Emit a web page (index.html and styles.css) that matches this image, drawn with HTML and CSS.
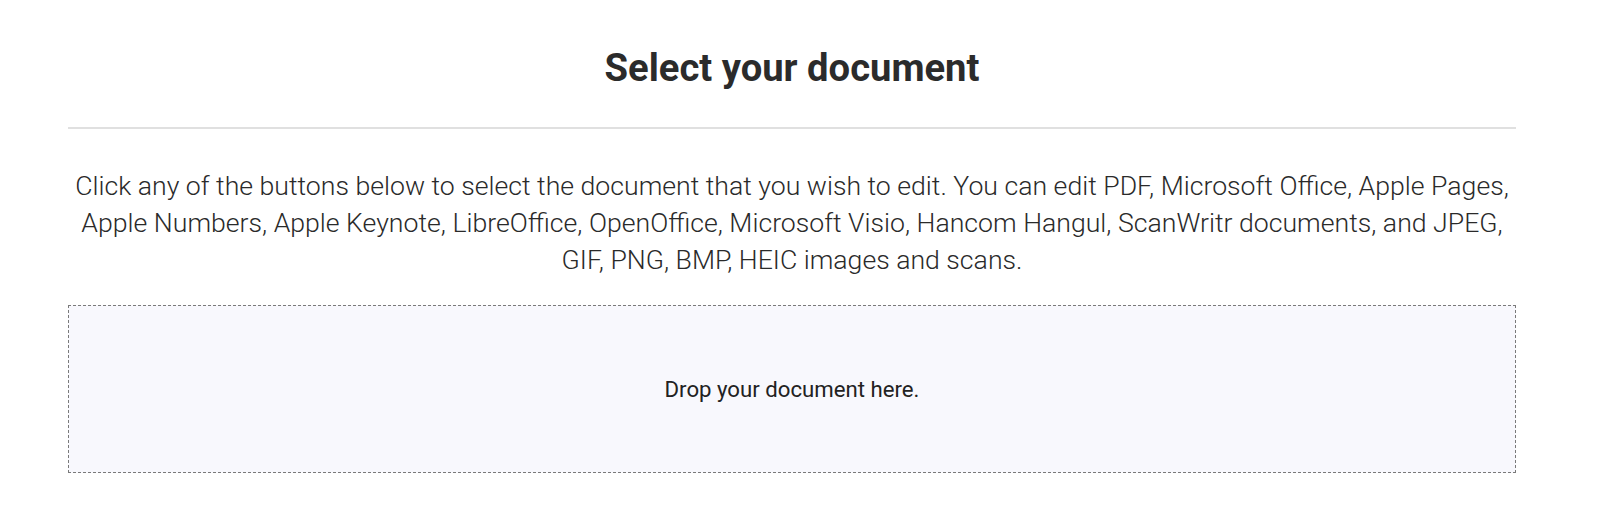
FILE: index.html
```html
<!DOCTYPE html>
<html>
<head>
<meta charset="utf-8">
<link rel="stylesheet" href="styles.css">
</head>
<body>
<main class="page">
  <h1 class="title">Select your document</h1>
  <hr class="divider">
  <p class="intro">Click any of the buttons below to select the document that you wish to edit. You can edit PDF, Microsoft Office, Apple Pages, Apple Numbers, Apple Keynote, LibreOffice, OpenOffice, Microsoft Visio, Hancom Hangul, ScanWritr documents, and JPEG, GIF, PNG, BMP, HEIC images and scans.</p>
  <div class="dropzone">
    <span class="drop-text">Drop your document here.</span>
  </div>
</main>
</body>
</html>
```
FILE: styles.css
```css
html, body {
  margin: 0;
  padding: 0;
  background: #ffffff;
}
body {
  font-family: Roboto, "Noto Sans", sans-serif;
  color: #333333;
}
.page {
  margin: 0 84px 0 68px;
  display: flex;
  flex-direction: column;
}
.title {
  margin: 0;
  padding-top: 44px;
  font-size: 38.2px;
  font-weight: 700;
  line-height: 48px;
  text-align: center;
  color: #2b2b2b;
}
.divider {
  margin: 35px 0 0 0;
  border: 0;
  height: 2px;
  background: #e0e0e0;
}
.intro {
  margin: 39px 0 0 0;
  font-size: 26.65px;
  font-weight: 300;
  line-height: 37px;
  text-align: center;
  color: #2a2a2a;
}
.dropzone {
  margin-top: 26px;
  height: 166px;
  border: 1px dashed #7a7a7a;
  background: #f8f8fd;
  display: flex;
  align-items: center;
  justify-content: center;
}
.drop-text {
  font-size: 22.2px;
  font-weight: 400;
  color: #222222;
}
```
